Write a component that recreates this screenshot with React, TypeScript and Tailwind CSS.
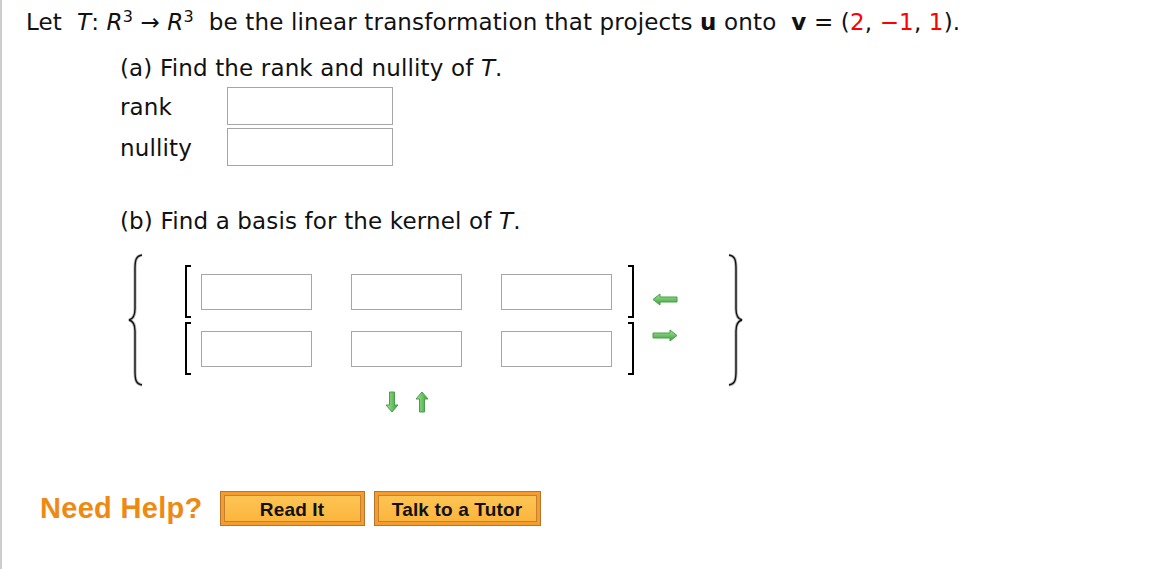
import React from "react";

const Brace = ({ flip = false }: { flip?: boolean }) => (
  <svg
    width="16"
    height="134"
    viewBox="0 0 16 134"
    className={flip ? "-scale-x-100" : ""}
  >
    <path
      d="M14,2 C8,3 7,7 7,16 L7,56 C7,63 5,66 1,67 C5,68 7,71 7,78 L7,118 C7,127 8,131 14,132"
      fill="none"
      stroke="#bdbdbd"
      strokeWidth="3.2"
    />
    <path
      d="M14,2 C8,3 7,7 7,16 L7,56 C7,63 5,66 1,67 C5,68 7,71 7,78 L7,118 C7,127 8,131 14,132"
      fill="none"
      stroke="#111"
      strokeWidth="1.4"
    />
  </svg>
);

const GreenDefs = ({ id, vertical }: { id: string; vertical?: boolean }) => (
  <defs>
    <linearGradient id={id} x1="0" y1="0" x2={vertical ? "1" : "0"} y2={vertical ? "0" : "1"}>
      <stop offset="0" stopColor="#a8e4a0" />
      <stop offset="0.5" stopColor="#6cc466" />
      <stop offset="1" stopColor="#3f9a3f" />
    </linearGradient>
  </defs>
);

const ArrowLeft = () => (
  <svg width="26" height="13" viewBox="0 0 26 13">
    <GreenDefs id="gl" />
    <path d="M1,6.5 L8,1 L8,4 L25,4 L25,9 L8,9 L8,12 Z" fill="url(#gl)" stroke="#4a9e4a" strokeWidth="1" />
  </svg>
);

const ArrowRight = () => (
  <svg width="26" height="13" viewBox="0 0 26 13">
    <GreenDefs id="gr" />
    <path d="M25,6.5 L18,1 L18,4 L1,4 L1,9 L18,9 L18,12 Z" fill="url(#gr)" stroke="#4a9e4a" strokeWidth="1" />
  </svg>
);

const ArrowDown = () => (
  <svg width="14" height="22" viewBox="0 0 14 22">
    <GreenDefs id="gd" vertical />
    <path d="M7,21 L1,14 L4.5,14 L4.5,1 L9.5,1 L9.5,14 L13,14 Z" fill="url(#gd)" stroke="#4a9e4a" strokeWidth="1" />
  </svg>
);

const ArrowUp = () => (
  <svg width="14" height="22" viewBox="0 0 14 22">
    <GreenDefs id="gu" vertical />
    <path d="M7,1 L1,8 L4.5,8 L4.5,21 L9.5,21 L9.5,8 L13,8 Z" fill="url(#gu)" stroke="#4a9e4a" strokeWidth="1" />
  </svg>
);

const Box = ({ w = "w-[111px]", h = "h-[36px]" }: { w?: string; h?: string }) => (
  <input type="text" className={`${w} ${h} border border-[#a6a6a6] bg-white outline-none`} />
);

const LeftBracket = () => (
  <div className="w-[6px] h-[53px] border-l-2 border-t-2 border-b-2 border-black" />
);
const RightBracket = () => (
  <div className="w-[6px] h-[53px] border-r-2 border-t-2 border-b-2 border-black" />
);

const HelpButton = ({ label, w }: { label: string; w: string }) => (
  <button
    type="button"
    className={`${w} h-[35px] border border-[#b9742c] bg-[#f59c30] p-[3px] flex`}
  >
    <span className="flex-1 flex items-center justify-center border border-[#c7802e] bg-gradient-to-b from-[#fdc453] to-[#fcb53d] text-[19px] font-bold text-[#111] font-['Liberation_Sans',Arial,sans-serif] pt-[2px]">
      {label}
    </span>
  </button>
);

const App = () => {
  return (
    <div className="w-[1153px] h-[569px] bg-white border-l-2 border-[#cccccc] font-['DejaVu_Sans',Verdana,sans-serif] text-[#111] text-[23px] tracking-[0.15px] overflow-hidden">
      <p className="pl-[24px] pt-[8px] leading-[28px] whitespace-nowrap">
        Let&nbsp; <i>T</i>: <i>R</i>
        <sup className="text-[16px] -top-[8px]">3</sup> → <i>R</i>
        <sup className="text-[16px] -top-[8px]">3</sup>&nbsp; be the linear transformation that projects{" "}
        <b>u</b> onto&nbsp; <b>v</b> = (<span className="text-[#ff0000]">2</span>,{" "}
        <span className="text-[#ff0000]">−1</span>, <span className="text-[#ff0000]">1</span>).
      </p>

      <div className="ml-[118px]">
        <p className="mt-[18px] leading-[28px]">
          (a) Find the rank and nullity of <i>T</i>.
        </p>
        <div className="mt-[5px] grid grid-cols-[107px_166px] gap-y-[3px] items-center">
          <span className="pt-[2px]">rank</span>
          <Box w="w-[166px]" h="h-[38px]" />
          <span className="pt-[2px]">nullity</span>
          <Box w="w-[166px]" h="h-[38px]" />
        </div>

        <p className="mt-[41px] leading-[28px]">
          (b) Find a basis for the kernel of <i>T</i>.
        </p>

        <div className="mt-[18px] flex items-center">
          <div className="ml-[8px]">
            <Brace />
          </div>
          <div className="ml-[41px] flex flex-col gap-[4px]">
            <div className="flex items-center">
              <LeftBracket />
              <div className="ml-[10px] flex gap-[39px]">
                <Box />
                <Box />
                <Box />
              </div>
              <div className="ml-[16px]">
                <RightBracket />
              </div>
              <div className="ml-[18px] mt-[16px]">
                <ArrowLeft />
              </div>
            </div>
            <div className="flex items-center">
              <LeftBracket />
              <div className="ml-[10px] flex gap-[39px]">
                <Box />
                <Box />
                <Box />
              </div>
              <div className="ml-[16px]">
                <RightBracket />
              </div>
              <div className="ml-[18px] -mt-[26px]">
                <ArrowRight />
              </div>
            </div>
          </div>
          <div className="ml-[49px]">
            <Brace flip />
          </div>
        </div>

        <div className="ml-[265px] mt-[4px] flex gap-[16px]">
          <ArrowDown />
          <ArrowUp />
        </div>
      </div>

      <div className="ml-[38px] mt-[74px] flex items-center">
        <span className="text-[29px] font-bold text-[#ee8a14] font-['Liberation_Sans',Arial,sans-serif] tracking-[0.3px]">
          Need Help?
        </span>
        <div className="ml-[17px] flex gap-[9px]">
          <HelpButton label="Read It" w="w-[145px]" />
          <HelpButton label="Talk to a Tutor" w="w-[167px]" />
        </div>
      </div>
    </div>
  );
};

export default App;
